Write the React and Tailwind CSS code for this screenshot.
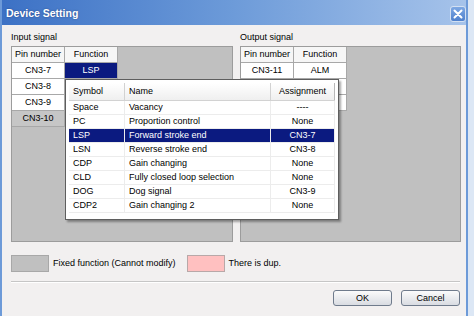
const rows = [
  ["Space", "Vacancy", "----"],
  ["PC", "Proportion control", "None"],
  ["LSP", "Forward stroke end", "CN3-7", true],
  ["LSN", "Reverse stroke end", "CN3-8"],
  ["CDP", "Gain changing", "None"],
  ["CLD", "Fully closed loop selection", "None"],
  ["DOG", "Dog signal", "CN3-9"],
  ["CDP2", "Gain changing 2", "None"],
];

function TRow({ a, b, aCls = "bg-white", bCls = "bg-white" }) {
  return (
    <div className="flex h-[16px]">
      <div className={`w-[53px] flex items-center justify-center border-r border-b border-[#a8a8a8] ${aCls}`}>{a}</div>
      <div className={`w-[53px] flex items-center justify-center border-r border-b border-[#a8a8a8] ${bCls}`}>{b}</div>
    </div>
  );
}

function Group({ label, width, children }) {
  return (
    <div className="flex flex-col" style={{ width }}>
      <div className="h-[11px] leading-[11px] mb-[3px]">{label}</div>
      <div className="h-[196px] border border-[#9c9c9c] bg-[#c0c0c0] flex flex-col">{children}</div>
    </div>
  );
}

export default function App() {
  return (
    <div className="w-[474px] h-[316px] overflow-hidden flex bg-[#dce7f5] font-['Liberation_Sans',Arial,sans-serif] text-[9px] text-black relative">
      <div className="w-[468px] h-full flex flex-col border-l-2 border-r-2 border-[#6d9ad8] bg-[#f2f0f0] shrink-0">
        <div className="h-[25px] shrink-0 flex items-center justify-between pt-[3px] pl-[4px] pr-[0px] bg-gradient-to-r from-[#3c71c5] via-[#6d9bd9] to-[#a6c3ea]">
          <span className="text-white font-bold text-[10.5px] [text-shadow:0_0_2px_rgba(0,0,40,0.4)]">Device Setting</span>
          <div className="w-[16px] h-[16px] rounded-[3px] border border-[#d3e0f2] bg-gradient-to-b from-[#7ea8e3] to-[#4f80cc] flex items-center justify-center">
            <svg width="10" height="10" viewBox="0 0 10 10">
              <path d="M1.5 1.5 L8.5 8.5 M8.5 1.5 L1.5 8.5" stroke="white" strokeWidth="2" strokeLinecap="round" />
            </svg>
          </div>
        </div>
        <div className="flex-1 flex flex-col pl-[9px] pr-[5px] pt-[7px]">
          <div className="flex gap-[7px]">
            <Group label="Input signal" width={222}>
              <TRow a="Pin number" b="Function" aCls="bg-[#f6f6f6]" bCls="bg-[#f6f6f6]" />
              <TRow a="CN3-7" b="LSP" bCls="bg-[#0b1a80] text-white" />
              <TRow a="CN3-8" b="" />
              <TRow a="CN3-9" b="" />
              <TRow a="CN3-10" b="" aCls="bg-[#c6c6c6]" bCls="bg-[#c6c6c6]" />
            </Group>
            <Group label="Output signal" width={221}>
              <TRow a="Pin number" b="Function" aCls="bg-[#f6f6f6]" bCls="bg-[#f6f6f6]" />
              <TRow a="CN3-11" b="ALM" />
              <TRow a="" b="" />
              <TRow a="" b="" />
            </Group>
          </div>
          <div className="flex items-center mt-[13px] h-[17px]">
            <div className="w-[38px] h-[17px] bg-[#c0c0c0] border border-[#a8a8a8]" />
            <span className="ml-[4px]">Fixed function (Cannot modify)</span>
            <div className="w-[38px] h-[17px] bg-[#ffc0c0] border border-[#b8a8a8] ml-[11px]" />
            <span className="ml-[4px]">There is dup.</span>
          </div>
          <div className="mt-[9px] h-[2px] border-t border-[#c6c6c6] border-b border-b-white w-[449px]" />
          <div className="flex justify-end gap-[9px] mt-[7px] w-[449px]">
            <button className="w-[59px] h-[16px] rounded-[3px] border border-[#6f7b8c] bg-gradient-to-b from-[#fbfbfb] to-[#d9dce2] text-[9px] leading-none">OK</button>
            <button className="w-[59px] h-[16px] rounded-[3px] border border-[#6f7b8c] bg-gradient-to-b from-[#fbfbfb] to-[#d9dce2] text-[9px] leading-none">Cancel</button>
          </div>
        </div>
      </div>

      <div className="absolute left-[65px] top-[79px] w-[274px] h-[141px] bg-white border border-[#5e5e5e] shadow-[2px_2px_2px_rgba(0,0,0,0.35)] p-[3px] flex flex-col">
        <div className="flex h-[18px] border-b border-[#d2d2d2] bg-gradient-to-b from-white to-[#efefef]">
          <div className="w-[56px] border-r border-[#d2d2d2] flex items-center pl-[4px]">Symbol</div>
          <div className="w-[146px] border-r border-[#d2d2d2] flex items-center pl-[4px]">Name</div>
          <div className="w-[64px] border-r border-[#b8b8b8] flex items-center justify-center">Assignment</div>
        </div>
        {rows.map(([s, n, a, sel]) => (
          <div key={s} className="flex h-[14px]">
            <div className={`w-[56px] border-r border-b border-[#ececec] flex items-center pl-[4px] ${sel ? "bg-[#0b1a80] text-white" : ""}`}>{s}</div>
            <div className={`w-[146px] border-r border-b border-[#ececec] flex items-center pl-[4px] ${sel ? "bg-[#0b1a80] text-white" : ""}`}>{n}</div>
            <div className={`w-[64px] border-r border-b border-[#ececec] flex items-center justify-center ${sel ? "bg-[#0b1a80] text-white" : ""}`}>{a}</div>
          </div>
        ))}
      </div>
    </div>
  );
}
